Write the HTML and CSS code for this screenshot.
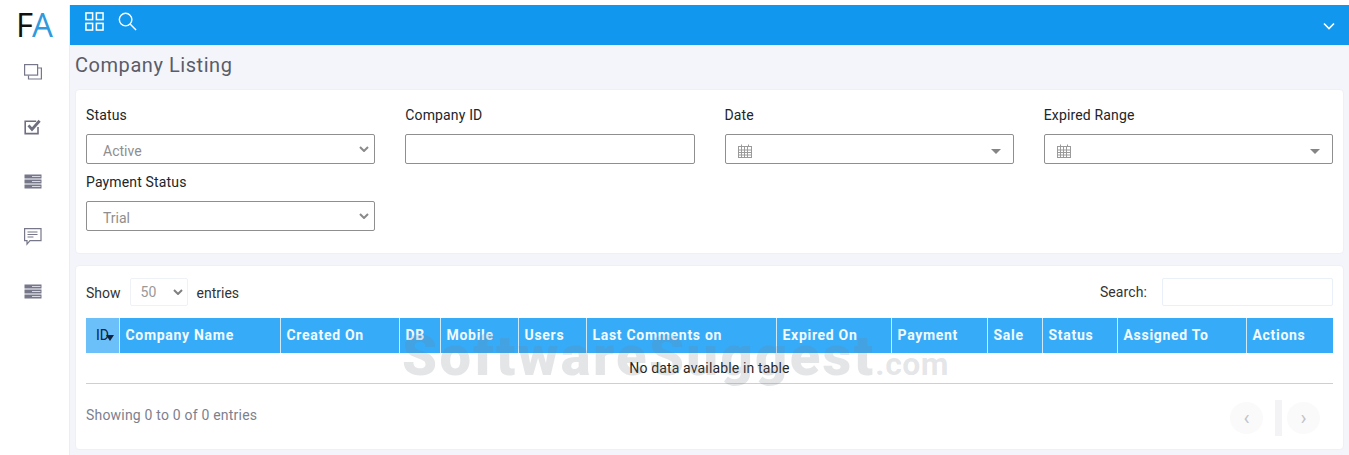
FILE: index.html
```html
<!DOCTYPE html>
<html lang="en">
<head>
<meta charset="utf-8">
<title>Company Listing</title>
<link rel="stylesheet" href="styles.css">
</head>
<body>
<div class="app">
  <aside class="sidebar">
    <div class="logo"><span class="logo-f">F</span><span class="logo-a">A</span></div>
    <nav class="side-nav">
      <a class="side-item"><svg viewBox="0 0 18 16" width="18" height="16" fill="none" stroke="#77778a" stroke-width="1.2"><rect x="0.6" y="0.6" width="13" height="10.5"/><path d="M14 4h3.4v11H4.5v-3.6"/></svg></a>
      <a class="side-item"><svg viewBox="0 0 18 16" width="18" height="16" fill="none" stroke="#6f6f80"><path d="M14 8v6.6H1.2V2.2h11" stroke-width="1.6"/><path d="M4.5 6.4l3.5 4 7.6-8.6" stroke-width="2.8"/></svg></a>
      <a class="side-item"><svg viewBox="0 0 18 15" width="18" height="15"><path fill="#77778a" d="M0.5 0.5h17v4h-17zM0.5 5.5h17v4h-17zM0.5 10.5h17v4h-17z"/><path stroke="#d8d8e4" stroke-width="1" d="M8 2.5h8.5M8 7.5h8.5M8 12.5h8.5"/></svg></a>
      <a class="side-item"><svg viewBox="0 0 18 18" width="18" height="18" fill="none" stroke="#77778a" stroke-width="1.2"><path d="M0.6 0.6h16.4v12H6l-3 3.6v-3.6H0.6z"/><path d="M3.5 4h10M3.5 6.5h10M3.5 9h6"/></svg></a>
      <a class="side-item"><svg viewBox="0 0 18 15" width="18" height="15"><path fill="#77778a" d="M0.5 0.5h17v4h-17zM0.5 5.5h17v4h-17zM0.5 10.5h17v4h-17z"/><path stroke="#d8d8e4" stroke-width="1" d="M8 2.5h8.5M8 7.5h8.5M8 12.5h8.5"/></svg></a>
    </nav>
  </aside>
  <div class="main">
    <header class="topbar">
      <div class="top-icons">
        <svg viewBox="0 0 20 20" width="19" height="19" fill="none" stroke="#fff" stroke-width="1.6"><rect x="1" y="1" width="7" height="7"/><rect x="12" y="1" width="7" height="7"/><rect x="1" y="12" width="7" height="7"/><rect x="12" y="12" width="7" height="7"/></svg>
        <svg viewBox="0 0 20 20" width="19" height="19" fill="none" stroke="#fff" stroke-width="1.5"><circle cx="8" cy="8" r="6.6"/><path d="M13 13l6 6"/></svg>
      </div>
      <svg class="top-caret" viewBox="0 0 12 8" width="12" height="8" fill="none" stroke="#fff" stroke-width="1.6"><path d="M1 1.5l5 5 5-5"/></svg>
    </header>
    <h1 class="page-title">Company Listing</h1>
    <section class="card filters">
      <div class="field"><label class="field-label">Status</label>
        <div class="control"><span class="value">Active</span><svg class="chev" viewBox="0 0 10 6" width="10" height="6" fill="none" stroke="#8a8a8a" stroke-width="2"><path d="M1 1l4 4 4-4"/></svg></div></div>
      <div class="field"><label class="field-label">Company ID</label>
        <div class="control"></div></div>
      <div class="field"><label class="field-label">Date</label>
        <div class="control date"><svg class="cal" viewBox="0 0 14 14" width="14" height="14" fill="none" stroke="#9a9a9a"><rect x="0.5" y="2.5" width="13" height="11"/><path d="M0.5 6h13M0.5 8.5h13M0.5 11h13M3.5 2.5v11M6.5 2.5v11M9.5 2.5v11M3.5 0.5v2M10.5 0.5v2"/></svg><span class="tri"></span></div></div>
      <div class="field"><label class="field-label">Expired Range</label>
        <div class="control date"><svg class="cal" viewBox="0 0 14 14" width="14" height="14" fill="none" stroke="#9a9a9a"><rect x="0.5" y="2.5" width="13" height="11"/><path d="M0.5 6h13M0.5 8.5h13M0.5 11h13M3.5 2.5v11M6.5 2.5v11M9.5 2.5v11M3.5 0.5v2M10.5 0.5v2"/></svg><span class="tri"></span></div></div>
      <div class="field"><label class="field-label">Payment Status</label>
        <div class="control"><span class="value">Trial</span><svg class="chev" viewBox="0 0 10 6" width="10" height="6" fill="none" stroke="#8a8a8a" stroke-width="2"><path d="M1 1l4 4 4-4"/></svg></div></div>
    </section>
    <section class="card listing">
      <div class="table-tools">
        <div class="length">Show <span class="length-box"><span>50</span><svg viewBox="0 0 10 6" width="10" height="6" fill="none" stroke="#808080" stroke-width="2"><path d="M1 1l4 4 4-4"/></svg></span> entries</div>
        <div class="search">Search: <span class="search-box"></span></div>
      </div>
      <table class="data">
        <colgroup>
          <col class="c1"><col class="c2"><col class="c3"><col class="c4"><col class="c5"><col class="c6"><col class="c7"><col class="c8"><col class="c9"><col class="c10"><col class="c11"><col class="c12"><col class="c13">
        </colgroup>
        <thead>
          <tr>
            <th class="sorted">ID<span class="sort-tri"></span></th><th>Company Name</th><th>Created On</th><th>DB</th><th>Mobile</th><th>Users</th><th>Last Comments on</th><th>Expired On</th><th>Payment</th><th>Sale</th><th>Status</th><th>Assigned To</th><th>Actions</th>
          </tr>
        </thead>
        <tbody>
          <tr><td colspan="13">No data available in table</td></tr>
        </tbody>
      </table>
      <div class="table-foot">
        <div class="info">Showing 0 to 0 of 0 entries</div>
        <div class="pager"><span class="page-btn">‹</span><span class="page-bar"></span><span class="page-btn">›</span></div>
      </div>
    </section>
  </div>
</div>
<div class="watermark">SoftwareSuggest<span class="wm-com">.com</span></div>
</body>
</html>
```
FILE: styles.css
```css
* { box-sizing: border-box; }
html, body { margin: 0; height: 455px; overflow: hidden; background: #fff; }
body { font-family: Roboto, "Liberation Sans", sans-serif; font-size: 14px; color: #212529; position: relative; }
.app { display: flex; height: 455px; padding-top: 5px; }
.sidebar { width: 70px; flex: none; background: #fff; border-right: 1px solid #e6eef8; }
.logo { height: 40px; display: flex; justify-content: center; font-size: 33px; line-height: 40px; font-weight: 400; font-family: "Open Sans", sans-serif; letter-spacing: -1px; padding-right: 1px; }
.logo-f { color: #111; }
.logo-a { color: #2f9bdc; }
.side-nav { display: flex; flex-direction: column; align-items: center; margin-top: -1px; }
.side-item { height: 55px; display: flex; align-items: center; justify-content: center; width: 100%; padding-right: 4px; }
.main { flex: 1; min-width: 0; background: #f3f5fa; padding: 0 5px; }
.topbar { height: 40px; margin: 0 -5px; background: #1197ee; display: flex; align-items: flex-start; justify-content: space-between; padding: 7px 14px 0 15px; }
.top-icons { display: flex; gap: 14px; }
.top-caret { margin-top: 10px; }
.page-title { margin: 0; height: 44px; padding-top: 8px; font-size: 20px; line-height: 24px; font-weight: 400; color: #5a5c69; letter-spacing: 0.55px; }
.card { background: #fff; border-radius: 4px; border: 1px solid #eef0f6; }
.filters { height: 165px; padding: 10px 10px 0; display: grid; grid-template-columns: repeat(4, 1fr); column-gap: 30px; grid-auto-rows: 67px; }
.field-label { display: block; line-height: 20px; margin-top: 5px; height: 29px; letter-spacing: 0.15px; }
.field { height: 67px; }
.control { height: 30px; border: 1px solid #8f8f8f; border-radius: 2px; display: flex; align-items: center; position: relative; padding: 4px 5px 0 16px; background: #fff; }
.value { color: #8e8e8e; }
.chev { margin-left: auto; margin-top: -5px; }
.date { padding: 4px 12px 0 12px; }
.tri { margin-left: auto; width: 0; height: 0; border-left: 5px solid transparent; border-right: 5px solid transparent; border-top: 5px solid #858585; margin-top: 1px; }
.listing { margin-top: 11px; height: 185px; padding: 0 10px; }
.table-tools { height: 52px; display: flex; justify-content: space-between; align-items: flex-start; padding-top: 13px; }
.length { display: flex; align-items: center; gap: 9px; color: #333; }
.length-box { width: 58px; height: 28px; margin: -1px 0 1px; border: 1px solid #eef1f6; border-radius: 2px; display: flex; align-items: center; justify-content: space-between; padding: 0 4px 0 10px; color: #999; }
.search { display: flex; align-items: center; gap: 15px; color: #333; margin-top: -1px; letter-spacing: 0.1px; }
.search-box { width: 171px; height: 28px; border: 1px solid #eaf0f7; border-radius: 2px; display: block; }
.data { width: 100%; border-collapse: collapse; table-layout: fixed; }
.c1 { width: 33px; } .c2 { width: 161px; } .c3 { width: 119px; } .c4 { width: 41px; } .c5 { width: 78px; } .c6 { width: 68px; } .c7 { width: 190px; } .c8 { width: 115px; } .c9 { width: 96px; } .c10 { width: 55px; } .c11 { width: 75px; } .c12 { width: 129px; } .c13 { width: 87px; }
.data th { height: 35px; background: #36acf8; color: #f2faff; text-align: left; padding: 0 0 2px 6px; font-weight: 700; font-size: 14px; letter-spacing: 0.7px; border-left: 1px solid #cfeafd; white-space: nowrap; }
.data th:first-child { border-left: 0; }
.data th.sorted { background: #6cc0fa; color: #0d2440; font-weight: 400; padding-left: 10px; letter-spacing: 0; position: relative; }
.sort-tri { position: absolute; left: 20px; top: 17px; width: 0; height: 0; border-left: 4px solid transparent; border-right: 4px solid transparent; border-top: 6px solid #0d2440; }
.data td { height: 30px; text-align: center; padding: 1px 0 0; border-bottom: 1px solid #cfcfd3; color: #222; letter-spacing: 0.15px; line-height: 28px; }
.table-foot { display: flex; justify-content: space-between; padding-top: 16px; }
.info { color: #7d7f8e; line-height: 30px; letter-spacing: 0.2px; }
.pager { display: flex; align-items: center; margin-right: 13px; height: 36px; }
.page-btn { width: 33px; height: 32px; border-radius: 50%; background: #fafafb; color: #c2c2c8; display: flex; align-items: center; justify-content: center; font-size: 20px; line-height: 1; }
.page-bar { width: 7px; height: 36px; background: #f3f3f5; margin: 0 5px 0 12px; }
.watermark { position: absolute; left: 402px; top: 326px; font-family: Roboto, sans-serif; font-size: 56px; font-weight: 900; letter-spacing: 2.4px; line-height: 60px; color: rgba(120, 125, 135, 0.2); white-space: nowrap; pointer-events: none; }
.wm-com { font-size: 32px; font-weight: 700; letter-spacing: 0.5px; }
```
